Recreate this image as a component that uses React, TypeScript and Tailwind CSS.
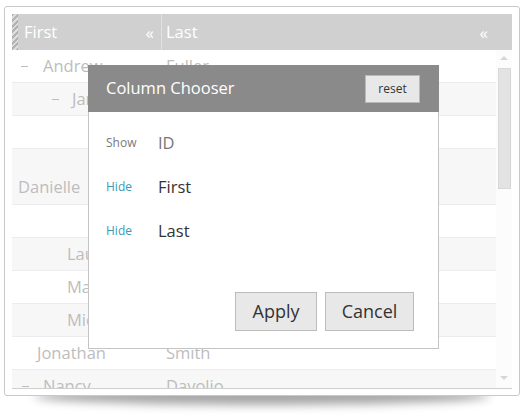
import React from "react";

const font = { fontFamily: '"Open Sans", "Noto Sans", sans-serif' };

type Row = {
  h: number;
  alt: boolean;
  minus?: number;
  firstX?: number;
  first?: string;
  last?: string;
  bottom?: boolean;
};

const rows: Row[] = [
  { h: 33, alt: false, minus: 9, firstX: 31, first: "Andrew", last: "Fuller" },
  { h: 33, alt: true, minus: 40, firstX: 60, first: "Janet", last: "Leverling" },
  { h: 33, alt: false },
  { h: 56, alt: true, firstX: 6, first: "Danielle", bottom: true },
  { h: 33, alt: false },
  { h: 33, alt: true, firstX: 55, first: "Laura", last: "Callahan" },
  { h: 33, alt: false, firstX: 55, first: "Margaret", last: "Peacock" },
  { h: 33, alt: true, firstX: 55, first: "Michael", last: "Suyama" },
  { h: 33, alt: false, firstX: 25, first: "Jonathan", last: "Smith" },
  { h: 33, alt: true, minus: 10, firstX: 31, first: "Nancy", last: "Davolio" },
];

function GridRow({ r }: { r: Row }) {
  return (
    <div
      className={`relative flex shrink-0 border-b border-[#ececec] text-[16.5px] text-[#bdbdbd] ${
        r.alt ? "bg-[#f7f7f7]" : "bg-white"
      } ${r.bottom ? "items-end pb-[3px]" : "items-center"}`}
      style={{ height: r.h }}
    >
      <div className="relative flex h-full w-[150px] shrink-0 items-center">
        {r.minus !== undefined && (
          <div
            className="absolute top-1/2 h-[1px] w-[7px] bg-[#bdbdbd]"
            style={{ left: r.minus }}
          />
        )}
        {r.first && (
          <span
            className={`absolute leading-none ${r.bottom ? "bottom-[6px]" : ""}`}
            style={{ left: r.firstX }}
          >
            {r.first}
          </span>
        )}
      </div>
      <div className="flex h-full flex-1 items-center pl-[4px]">
        {r.last && <span className="leading-none">{r.last}</span>}
      </div>
    </div>
  );
}

export default function App() {
  return (
    <div className="relative h-[418px] w-[526px] overflow-hidden bg-white" style={font}>
      <div className="pl-[4px] pt-[6px]">
        <div className="relative w-[516px]">
          <div className="absolute bottom-[-9px] left-[30px] right-[30px] h-[18px] rounded-[50%] bg-black/35 blur-[5px]" />
          <div className="relative h-[390px] rounded-[3px] border border-[#c9c9c9] bg-white pb-[6px] pl-[7px] pr-[7px] pt-[7px]">
            {/* header */}
            <div className="flex h-[36px] bg-[#d0d0d0] text-[16.5px] text-white">
              <div className="w-[6px] shrink-0 bg-[repeating-linear-gradient(135deg,#b3b3b3_0px,#b3b3b3_2px,#dedede_2px,#dedede_4px)]" />
              <div className="flex w-[144px] shrink-0 items-center justify-between border-r border-[#e2e2e2] pl-[6px] pr-[7px]">
                <span>First</span>
                <span className="text-[17px] leading-none">«</span>
              </div>
              <div className="flex flex-1 items-center justify-between pl-[4px] pr-[24px]">
                <span>Last</span>
                <span className="text-[17px] leading-none">«</span>
              </div>
            </div>
            {/* body */}
            <div className="flex h-[339px] border-b border-[#cfcfcf]">
              <div className="flex w-[484px] flex-col overflow-hidden">
                {rows.map((r, i) => (
                  <GridRow key={i} r={r} />
                ))}
              </div>
              <div className="flex w-[16px] flex-col items-center bg-[#fcfcfc] pt-[6px]">
                <div className="h-0 w-0 border-x-[4px] border-b-[4px] border-x-transparent border-b-[#d6d6d6]" />
                <div className="mt-[8px] h-[121px] w-[13px] border border-[#d8d8d8] bg-[#e3e3e3]" />
                <div className="flex-1" />
                <div className="mb-[8px] h-0 w-0 border-x-[4px] border-t-[4px] border-x-transparent border-t-[#d6d6d6]" />
              </div>
            </div>
          </div>
        </div>
      </div>

      {/* Column chooser dialog */}
      <div className="absolute left-[88px] top-[65px] flex h-[284px] w-[351px] flex-col border border-[#c4c4c4] bg-white">
        <div className="-mx-[1px] -mt-[1px] flex h-[47px] items-center justify-between bg-[#8a8a8a] pl-[18px] pr-[19px]">
          <span className="text-[16.5px] text-white">Column Chooser</span>
          <button className="h-[28px] w-[55px] border border-[#b9b9b9] bg-[#e8e8e8] text-[12px] text-[#333]">
            reset
          </button>
        </div>
        <div className="flex flex-col pl-[17px] pt-[9px]">
          {[
            { a: "Show", c: "text-[#7a7a7a]", n: "ID", nc: "text-[#777]" },
            { a: "Hide", c: "text-[#3a9ab3]", n: "First", nc: "text-[#333]" },
            { a: "Hide", c: "text-[#3a9ab3]", n: "Last", nc: "text-[#333]" },
          ].map((it, i) => (
            <div key={i} className="flex h-[44px] items-center">
              <span className={`w-[52px] text-[12px] ${it.c}`}>{it.a}</span>
              <span className={`text-[16.5px] ${it.nc}`}>{it.n}</span>
            </div>
          ))}
        </div>
        <div className="flex-1" />
        <div className="flex justify-end gap-[8px] pb-[17px] pr-[24px]">
          <button className="h-[39px] w-[82px] border border-[#bcbcbc] bg-[#e8e8e8] text-[18px] text-[#333]">
            Apply
          </button>
          <button className="h-[39px] w-[89px] border border-[#bcbcbc] bg-[#e8e8e8] text-[18px] text-[#333]">
            Cancel
          </button>
        </div>
      </div>
    </div>
  );
}
